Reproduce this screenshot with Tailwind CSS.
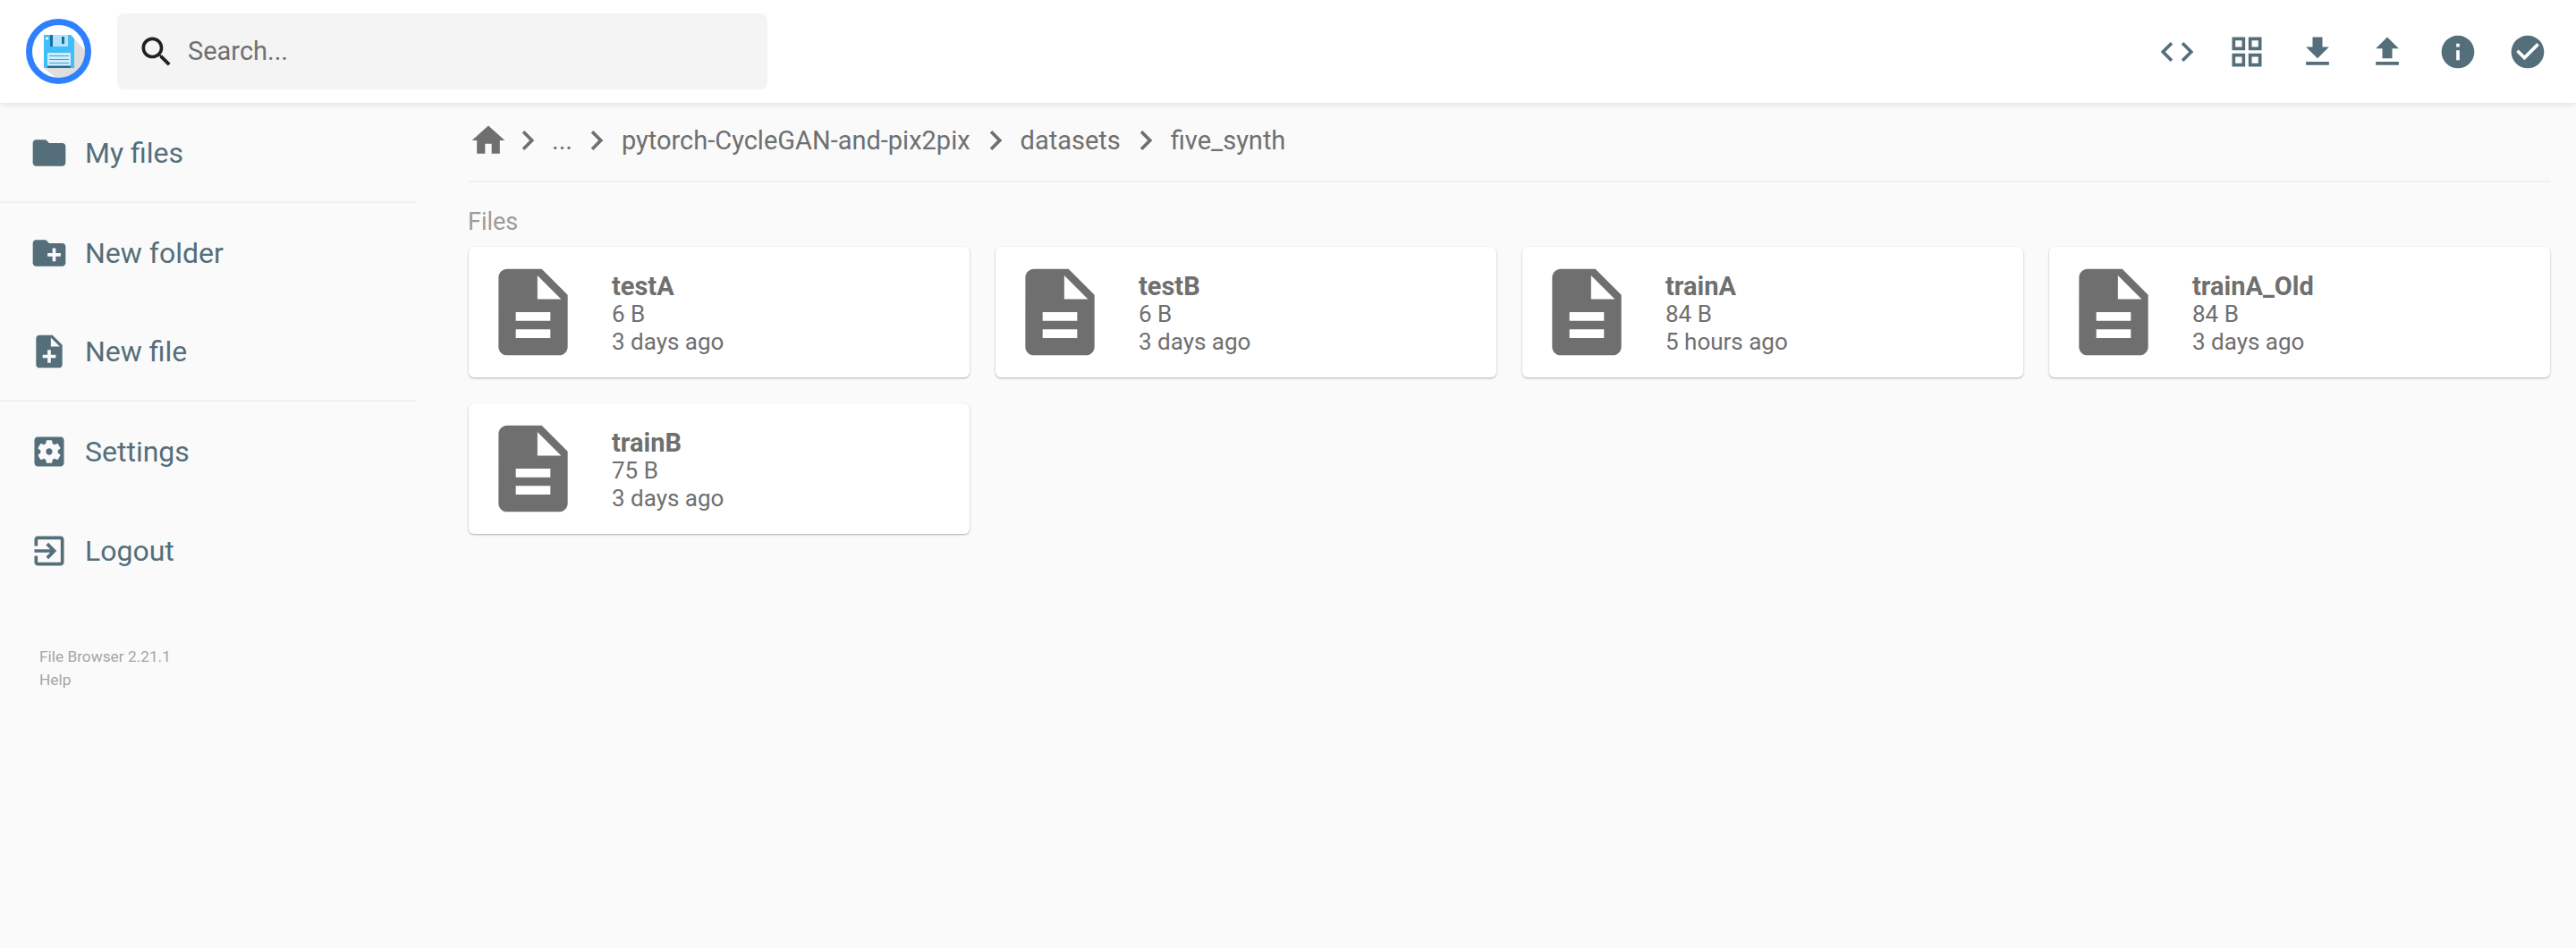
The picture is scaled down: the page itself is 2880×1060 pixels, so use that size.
<!DOCTYPE html>
<html lang="en">
<head>
    <meta charset="UTF-8">
    <title>File Browser</title>
    <script src="https://cdn.jsdelivr.net/npm/@tailwindcss/browser@4"></script>
</head>
<body class="h-screen overflow-hidden bg-[#fafafa] font-['Roboto',sans-serif] antialiased">

    <!-- top bar -->
    <header class="relative z-10 flex h-[115px] items-center justify-between bg-white pr-[32px] pl-[29px] shadow-[0_2px_7px_rgba(0,0,0,0.1)]">
        <div class="flex items-center">
            <svg class="h-[73px] w-[73px]" viewBox="0 0 73 73">
                <defs><clipPath id="logo-clip"><circle cx="36.5" cy="36.5" r="33"/></clipPath></defs>
                <circle cx="36.5" cy="36.5" r="33" fill="#fff"/>
                <polygon clip-path="url(#logo-clip)" points="50,18 75,45 75,75 45,75 20,55" fill="#dedede"/>
                <path d="M20 18h30l4 4v33H20z" fill="#40bdfb"/>
                <rect x="27" y="18" width="20" height="13" fill="#b3e2fb"/>
                <rect x="27" y="18" width="3" height="13" fill="#1b6f9e"/>
                <rect x="40" y="20" width="3" height="8" fill="#1b6f9e"/>
                <circle cx="23.5" cy="22" r="1.8" fill="#e3f5fe"/>
                <rect x="24" y="38" width="26" height="17" fill="#cdeefd"/>
                <path d="M26 41.500h22M26 45.500h22M26 49.500h22" stroke="#4a9fd0" stroke-width="1"/>
                <rect x="24" y="52.500" width="26" height="2.500" fill="#1b6f9e"/>
                <circle cx="36.500" cy="36.500" r="33" fill="none" stroke="#2f80ff" stroke-width="7"/>
            </svg>
            <div class="ml-[29px] flex h-[85px] w-[727px] items-center rounded-[8px] bg-[#f4f4f4] pl-[22px]">
                <svg class="h-[44px] w-[44px] fill-[#222]" viewBox="0 0 24 24"><path d="M15.5 14h-.79l-.28-.27C15.41 12.59 16 11.11 16 9.5 16 5.91 13.09 3 9.500 3S3 5.910 3 9.500 5.910 16 9.500 16c1.610 0 3.090-.59 4.230-1.570l.27.28v.79l5 4.990L20.490 19l-4.990-5zm-6 0C7.010 14 5 11.990 5 9.500S7.010 5 9.500 5 14 7.010 14 9.500 11.990 14 9.500 14z"/></svg>
                <span class="ml-[13px] text-[29px] text-[#6f6f6f]">Search...</span>
            </div>
        </div>
        <div class="flex items-center gap-[34.500px] fill-[#546e7a]">
            <svg class="h-[44px] w-[44px]" viewBox="0 0 24 24"><path d="M9.400 16.600L4.800 12l4.600-4.600L8 6l-6 6 6 6 1.400-1.400zm5.200 0l4.600-4.600-4.600-4.600L16 6l6 6-6 6-1.400-1.400z"/></svg>
            <svg class="h-[44px] w-[44px]" viewBox="0 0 24 24"><path d="M3 3v8h8V3H3zm6 6H5V5h4v4zm-6 4v8h8v-8H3zm6 6H5v-4h4v4zm4-16v8h8V3h-8zm6 6h-4V5h4v4zm-6 4v8h8v-8h-8zm6 6h-4v-4h4v4z"/></svg>
            <svg class="h-[44px] w-[44px]" viewBox="0 0 24 24"><path d="M19 9h-4V3H9v6H5l7 7 7-7zM5 18v2h14v-2H5z"/></svg>
            <svg class="h-[44px] w-[44px]" viewBox="0 0 24 24"><path d="M9 16h6v-6h4l-7-7-7 7h4v6zm-4 2h14v2H5v-2z"/></svg>
            <svg class="h-[44px] w-[44px]" viewBox="0 0 24 24"><path d="M12 2C6.480 2 2 6.480 2 12s4.480 10 10 10 10-4.480 10-10S17.520 2 12 2zm1 15h-2v-6h2v6zm0-8h-2V7h2v2z"/></svg>
            <svg class="h-[44px] w-[44px]" viewBox="0 0 24 24"><path d="M12 2C6.480 2 2 6.480 2 12s4.480 10 10 10 10-4.480 10-10S17.520 2 12 2zm-2 15l-5-5 1.410-1.410L10 14.170l7.590-7.590L19 8l-9 9z"/></svg>
        </div>
    </header>

    <div class="flex">
        <!-- sidebar -->
        <nav class="w-[524px] shrink-0 pt-[2px]">
            <div class="w-[465px] text-[32px] text-[#546e7a]">
                <div class="flex h-[110px] items-center gap-[18px] border-b-2 border-[#f0f0f0] pl-[33px]">
                    <svg class="h-[44px] w-[44px] fill-[#546e7a]" viewBox="0 0 24 24"><path d="M10 4H4c-1.100 0-1.990.9-1.990 2L2 18c0 1.100.9 2 2 2h16c1.100 0 2-.9 2-2V8c0-1.100-.9-2-2-2h-8l-2-2z"/></svg>
                    <span>My files</span>
                </div>
                <div class="flex h-[111px] items-center gap-[18px] pl-[33px]">
                    <svg class="h-[44px] w-[44px] fill-[#546e7a]" viewBox="0 0 24 24"><path d="M20 6h-8l-2-2H4c-1.110 0-1.990.89-1.990 2L2 18c0 1.110.89 2 2 2h16c1.110 0 2-.89 2-2V8c0-1.110-.89-2-2-2zm-1 8h-3v3h-2v-3h-3v-2h3V9h2v3h3v2z"/></svg>
                    <span>New folder</span>
                </div>
                <div class="flex h-[111px] items-center gap-[18px] border-b-2 border-[#f0f0f0] pl-[33px]">
                    <svg class="h-[44px] w-[44px] fill-[#546e7a]" viewBox="0 0 24 24"><path d="M14 2H6c-1.100 0-1.990.9-1.990 2L4 20c0 1.100.89 2 1.990 2H18c1.100 0 2-.9 2-2V8l-6-6zm2 14h-3v3h-2v-3H8v-2h3v-3h2v3h3v2zm-3-7V3.500L18.500 9H13z"/></svg>
                    <span>New file</span>
                </div>
                <div class="flex h-[111px] items-center gap-[18px] pl-[33px]">
                    <svg class="h-[44px] w-[44px] fill-[#546e7a]" viewBox="0 0 24 24"><path d="M12 10c-1.100 0-2 .9-2 2s.9 2 2 2 2-.9 2-2-.9-2-2-2zm7-7H5c-1.110 0-2 .9-2 2v14c0 1.100.89 2 2 2h14c1.110 0 2-.9 2-2V5c0-1.100-.89-2-2-2zm-1.750 9c0 .23-.02.46-.05.68l1.480 1.160c.13.11.17.3.08.45l-1.400 2.420c-.09.15-.27.21-.43.15l-1.740-.7c-.36.28-.76.51-1.180.69l-.26 1.850c-.03.17-.18.3-.35.3h-2.800c-.17 0-.32-.13-.35-.29l-.26-1.850c-.43-.18-.82-.41-1.180-.69l-1.740.7c-.16.06-.34 0-.43-.15l-1.400-2.420c-.09-.15-.05-.34.08-.45l1.480-1.160c-.03-.23-.05-.46-.05-.69 0-.23.02-.46.05-.68l-1.480-1.160c-.13-.11-.17-.3-.08-.45l1.400-2.420c.09-.15.27-.21.43-.15l1.740.7c.36-.28.76-.51 1.180-.69l.26-1.850c.03-.17.18-.3.35-.3h2.800c.17 0 .32.13.35.29l.26 1.850c.43.18.82.41 1.180.69l1.740-.7c.16-.06.34 0 .43.15l1.400 2.420c.09.15.05.34-.08.45l-1.480 1.160c.03.23.05.46.05.69z"/></svg>
                    <span>Settings</span>
                </div>
                <div class="flex h-[111px] items-center gap-[18px] pl-[33px]">
                    <svg class="h-[44px] w-[44px] fill-[#546e7a]" viewBox="0 0 24 24"><path d="M10.090 15.590L11.500 17l5-5-5-5-1.410 1.410L12.670 11H3v2h9.670l-2.580 2.590zM19 3H5c-1.110 0-2 .9-2 2v4h2V5h14v14H5v-4H3v4c0 1.100.89 2 2 2h14c1.100 0 2-.9 2-2V5c0-1.100-.9-2-2-2z"/></svg>
                    <span>Logout</span>
                </div>
            </div>
            <div class="mt-[50px] pl-[44px] text-[17.3px] leading-[26px] text-[#a5a5a5]">
                <p>File Browser 2.21.1</p>
                <p>Help</p>
            </div>
        </nav>

        <!-- listing -->
        <main class="min-w-0 flex-1 pr-[29px]">
            <div class="flex h-[89px] items-center border-b-2 border-[#f0f0f0] pb-[4px] text-[29px] text-[#6f6f6f]">
                <svg class="h-[44px] w-[44px] fill-[#6f6f6f]" viewBox="0 0 24 24"><path d="M10 20v-6h4v6h5v-8h3L12 3 2 12h3v8z"/></svg>
                <svg class="h-[44px] w-[44px] fill-[#6f6f6f]" viewBox="0 0 24 24"><path d="M10 6L8.590 7.410 13.170 12l-4.580 4.590L10 18l6-6z"/></svg>
                <span class="px-[5px] pt-[2px]">...</span>
                <svg class="h-[44px] w-[44px] fill-[#6f6f6f]" viewBox="0 0 24 24"><path d="M10 6L8.590 7.410 13.170 12l-4.580 4.590L10 18l6-6z"/></svg>
                <span class="px-[6px] pt-[2px]">pytorch-CycleGAN-and-pix2pix</span>
                <svg class="h-[44px] w-[44px] fill-[#6f6f6f]" viewBox="0 0 24 24"><path d="M10 6L8.590 7.410 13.170 12l-4.580 4.590L10 18l6-6z"/></svg>
                <span class="px-[6px] pt-[2px]">datasets</span>
                <svg class="h-[44px] w-[44px] fill-[#6f6f6f]" viewBox="0 0 24 24"><path d="M10 6L8.590 7.410 13.170 12l-4.580 4.590L10 18l6-6z"/></svg>
                <span class="px-[6px] pt-[2px]">five_synth</span>
            </div>

            <h2 class="mt-[24px] mb-[8px] -ml-px text-[27px] leading-[40px] font-normal text-[#9b9b9b]">Files</h2>

            <div class="grid grid-cols-4 gap-x-[29px] gap-y-[29px]">
                <div class="flex h-[146px] items-center rounded-[6px] bg-white pl-[14px] shadow-[0_1px_3px_rgba(0,0,0,0.12),0_1px_2px_rgba(0,0,0,0.2)]">
                    <svg class="h-[116px] w-[116px] fill-[#6f6f6f]" viewBox="0 0 24 24"><path d="M14 2H6c-1.100 0-1.990.9-1.990 2L4 20c0 1.100.89 2 1.990 2H18c1.100 0 2-.9 2-2V8l-6-6zm2 16H8v-2h8v2zm0-4H8v-2h8v2zm-3-5V3.500L18.500 9H13z"/></svg>
                    <div class="ml-[30px] pt-[4px] text-[26px] leading-[31px] text-[#6f6f6f]">
                        <p class="text-[29px] font-bold">testA</p>
                        <p>6 B</p>
                        <p>3 days ago</p>
                    </div>
                </div>
                <div class="flex h-[146px] items-center rounded-[6px] bg-white pl-[14px] shadow-[0_1px_3px_rgba(0,0,0,0.12),0_1px_2px_rgba(0,0,0,0.2)]">
                    <svg class="h-[116px] w-[116px] fill-[#6f6f6f]" viewBox="0 0 24 24"><path d="M14 2H6c-1.100 0-1.990.9-1.990 2L4 20c0 1.100.89 2 1.990 2H18c1.100 0 2-.9 2-2V8l-6-6zm2 16H8v-2h8v2zm0-4H8v-2h8v2zm-3-5V3.500L18.500 9H13z"/></svg>
                    <div class="ml-[30px] pt-[4px] text-[26px] leading-[31px] text-[#6f6f6f]">
                        <p class="text-[29px] font-bold">testB</p>
                        <p>6 B</p>
                        <p>3 days ago</p>
                    </div>
                </div>
                <div class="flex h-[146px] items-center rounded-[6px] bg-white pl-[14px] shadow-[0_1px_3px_rgba(0,0,0,0.12),0_1px_2px_rgba(0,0,0,0.2)]">
                    <svg class="h-[116px] w-[116px] fill-[#6f6f6f]" viewBox="0 0 24 24"><path d="M14 2H6c-1.100 0-1.990.9-1.990 2L4 20c0 1.100.89 2 1.990 2H18c1.100 0 2-.9 2-2V8l-6-6zm2 16H8v-2h8v2zm0-4H8v-2h8v2zm-3-5V3.500L18.500 9H13z"/></svg>
                    <div class="ml-[30px] pt-[4px] text-[26px] leading-[31px] text-[#6f6f6f]">
                        <p class="text-[29px] font-bold">trainA</p>
                        <p>84 B</p>
                        <p>5 hours ago</p>
                    </div>
                </div>
                <div class="flex h-[146px] items-center rounded-[6px] bg-white pl-[14px] shadow-[0_1px_3px_rgba(0,0,0,0.12),0_1px_2px_rgba(0,0,0,0.2)]">
                    <svg class="h-[116px] w-[116px] fill-[#6f6f6f]" viewBox="0 0 24 24"><path d="M14 2H6c-1.100 0-1.990.9-1.990 2L4 20c0 1.100.89 2 1.990 2H18c1.100 0 2-.9 2-2V8l-6-6zm2 16H8v-2h8v2zm0-4H8v-2h8v2zm-3-5V3.500L18.500 9H13z"/></svg>
                    <div class="ml-[30px] pt-[4px] text-[26px] leading-[31px] text-[#6f6f6f]">
                        <p class="text-[29px] font-bold">trainA_Old</p>
                        <p>84 B</p>
                        <p>3 days ago</p>
                    </div>
                </div>
                <div class="flex h-[146px] items-center rounded-[6px] bg-white pl-[14px] shadow-[0_1px_3px_rgba(0,0,0,0.12),0_1px_2px_rgba(0,0,0,0.2)]">
                    <svg class="h-[116px] w-[116px] fill-[#6f6f6f]" viewBox="0 0 24 24"><path d="M14 2H6c-1.100 0-1.990.9-1.990 2L4 20c0 1.100.89 2 1.990 2H18c1.100 0 2-.9 2-2V8l-6-6zm2 16H8v-2h8v2zm0-4H8v-2h8v2zm-3-5V3.500L18.500 9H13z"/></svg>
                    <div class="ml-[30px] pt-[4px] text-[26px] leading-[31px] text-[#6f6f6f]">
                        <p class="text-[29px] font-bold">trainB</p>
                        <p>75 B</p>
                        <p>3 days ago</p>
                    </div>
                </div>
            </div>
        </main>
    </div>
</body>
</html>
